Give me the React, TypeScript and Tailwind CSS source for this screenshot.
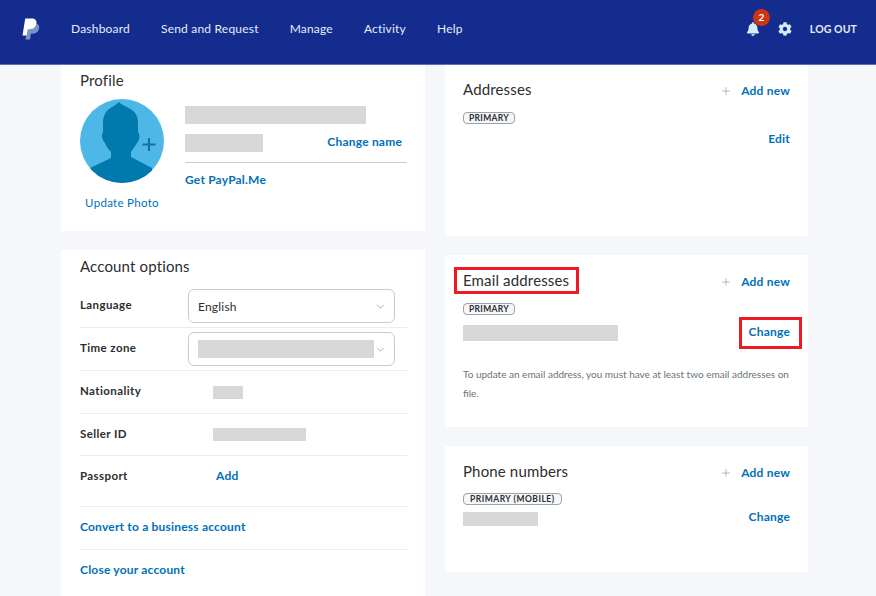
import React from "react";
import { FaBell, FaCog } from "react-icons/fa";
import { ChevronDown, Plus } from "lucide-react";

const font = "font-['Lato',sans-serif]";
const link = "text-[12px] font-bold text-[#0070ba] tracking-[0.2px]";
const title = "text-[15px] leading-[20px] tracking-[0.15px] text-[#2c2e2f]";
const label = "text-[11.5px] font-bold tracking-[0.4px] text-[#2c2e2f]";

function Logo() {
  return (
    <svg width="18" height="22" viewBox="0 0 18 22" className="shrink-0">
      <path d="M6 5.5h6.5c3.4 0 5.2 1.8 4.6 5-.6 3.4-3 5.200-6.300 5.200H8.900L8 21.500H3.500z" fill="#9db4dc" fillOpacity="0.75" />
      <path d="M3.200 0.500h6.300c3.500 0 5.500 1.700 4.900 5-.7 3.900-3.300 5.700-6.800 5.700H5.700l-1 6.300H0.500z" fill="#ffffff" />
    </svg>
  );
}

function Avatar() {
  return (
    <svg width="84" height="84" viewBox="0 0 84 84">
      <circle cx="42" cy="42" r="42" fill="#4db8e8" />
      <clipPath id="avatar-clip">
        <circle cx="42" cy="42" r="42" />
      </clipPath>
      <g clipPath="url(#avatar-clip)">
        <path
          d="M39 3C41 6 48 8 52 11C57 15 58 19 58 24V33C60 35 60 41 57 44C55 47 53 50 51 53V58L72 69V90H10V69L31 59V53C28 50 26 47 25 44C22 41 21 36 23 33V24C23 15 27 11 32 8C35 6 37 5 39 3z"
          fill="#0079ad"
        />
      </g>
      <path d="M69 39v13M62.500 45.500h13" stroke="#1a6f9c" strokeWidth="2.200" />
    </svg>
  );
}

function Blank({ className }: { className: string }) {
  return <div className={`bg-[#d8d8d8] ${className}`} />;
}

function AddNew() {
  return (
    <div className="flex items-center gap-[9px] pt-[3px]">
      <Plus size={12} strokeWidth={1} className="text-[#5f7f9c]" />
      <span className={link}>Add new</span>
    </div>
  );
}

function Badge({ children, wide }: { children: React.ReactNode; wide?: boolean }) {
  return (
    <span
      className={`flex h-[12px] w-fit items-center rounded-[4px] border border-[#9da3a6] bg-[#f5f7fa] text-[8.500px] font-bold leading-none text-[#2c2e2f] ${
        wide ? "px-[6px] tracking-[0.5px]" : "px-[5px] tracking-[0.3px]"
      }`}
    >
      {children}
    </span>
  );
}

function Select({ children }: { children: React.ReactNode }) {
  return (
    <div className="flex h-[34px] w-[207px] items-center justify-between rounded-[6px] border border-[#c5cdd3] pl-[9px] pr-[7px]">
      {children}
      <ChevronDown size={13} strokeWidth={1} className="text-[#6c7378]" />
    </div>
  );
}

function Row({ name, short, children }: { name: string; short?: boolean; children?: React.ReactNode }) {
  return (
    <div className={`flex items-center border-b border-[#eaeced] pl-[1px] ${short ? "h-[42px]" : "h-[43px]"}`}>
      <span className={`w-[108px] pb-[2px] ${label}`}>{name}</span>
      {children}
    </div>
  );
}

export default function App() {
  return (
    <div className={`${font} flex h-[596px] w-[876px] flex-col overflow-hidden bg-[#f5f7fa]`}>
      <header className="flex h-[65px] shrink-0 items-center border-b border-[#5c70b0] bg-[#142c8e] pb-[6px] pl-[22px] pr-[19px] text-white">
        <Logo />
        <nav className="ml-[31px] flex gap-[31px] text-[12px] tracking-[0.2px] text-[#e6edf7]">
          <span>Dashboard</span>
          <span>Send and Request</span>
          <span>Manage</span>
          <span>Activity</span>
          <span>Help</span>
        </nav>
        <div className="ml-auto flex items-center">
          <div className="relative mr-[18px]">
            <FaBell size={14} className="text-[#d5ecf9]" />
            <span className="absolute -right-[10px] -top-[13px] flex h-[17px] w-[17px] items-center justify-center rounded-full bg-[#d03511] text-[10px] font-bold text-white">
              2
            </span>
          </div>
          <FaCog size={14} className="mr-[18px] text-[#d5ecf9]" />
          <span className="pt-[1px] text-[10.500px] font-bold tracking-[0.1px] text-[#e6edf7]">LOG OUT</span>
        </div>
      </header>

      <main className="ml-[61px] flex w-[747px] gap-[20px]">
        <div className="flex w-[364px] shrink-0 flex-col gap-[19px]">
          <section className="h-[166px] bg-white pl-[19px] pr-[18px] pt-[5px]">
            <h2 className={title}>Profile</h2>
            <div className="mt-[9px] flex">
              <div className="flex w-[84px] shrink-0 flex-col items-center">
                <Avatar />
                <span className="mt-[12px] whitespace-nowrap text-[11.500px] leading-[16px] tracking-[0.3px] text-[#0070ba]">Update Photo</span>
              </div>
              <div className="ml-[21px] flex-1 pt-[7px]">
                <Blank className="h-[18px] w-[181px]" />
                <div className="mt-[10px] flex h-[18px] items-center justify-between pr-[5px]">
                  <Blank className="h-[18px] w-[78px]" />
                  <span className={`pb-[2px] ${link}`}>Change name</span>
                </div>
                <div className="mt-[10px] border-t border-[#c5cdd3] pt-[3px]">
                  <span className={link}>Get PayPal.Me</span>
                </div>
              </div>
            </div>
          </section>

          <section className="h-[346px] bg-white px-[18px] pt-[6px]">
            <h2 className={`pl-[1px] ${title}`}>Account options</h2>
            <div className="mt-[9px]">
              <Row name="Language">
                <Select>
                  <span className="pt-[2px] text-[12px] tracking-[0.2px] text-[#2c2e2f]">English</span>
                </Select>
              </Row>
              <Row name="Time zone">
                <Select>
                  <Blank className="h-[18px] w-[176px]" />
                </Select>
              </Row>
              <Row name="Nationality">
                <Blank className="ml-[25px] h-[13px] w-[30px]" />
              </Row>
              <Row name="Seller ID" short>
                <Blank className="ml-[25px] h-[13px] w-[93px]" />
              </Row>
              <div className="flex h-[51px] items-start border-b border-[#eaeced] pl-[1px] pt-[11px]">
                <span className={`w-[136px] ${label}`}>Passport</span>
                <span className={link}>Add</span>
              </div>
              <div className="flex h-[43px] items-center border-b border-[#eaeced] pl-[1px]">
                <span className={`pb-[2px] ${link}`}>Convert to a business account</span>
              </div>
              <div className="flex h-[40px] items-center pl-[1px]">
                <span className={link}>Close your account</span>
              </div>
            </div>
          </section>
        </div>

        <div className="flex w-[363px] shrink-0 flex-col gap-[19px]">
          <section className="h-[171px] bg-white px-[18px] pt-[14px]">
            <div className="flex h-[20px] items-start justify-between">
              <h2 className={title}>Addresses</h2>
              <AddNew />
            </div>
            <div className="mt-[13px]">
              <Badge>PRIMARY</Badge>
            </div>
            <div className={`mt-[6px] text-right ${link}`}>Edit</div>
          </section>

          <section className="h-[172px] bg-white px-[18px] pt-[15px]">
            <div className="flex h-[20px] items-start justify-between">
              <h2 className={`relative ${title}`}>
                Email addresses
                <span className="absolute -bottom-[4px] -left-[9px] -right-[10px] -top-[3px] border-[3px] border-[#ed1c24]" />
              </h2>
              <AddNew />
            </div>
            <div className="mt-[13px]">
              <Badge>PRIMARY</Badge>
            </div>
            <div className="mt-[8px] flex items-center justify-between">
              <Blank className="h-[16px] w-[155px]" />
              <span className={`relative pb-[2px] ${link}`}>
                Change
                <span className="absolute -bottom-[6px] -left-[10px] -right-[12px] -top-[6px] border-[3px] border-[#ed1c24]" />
              </span>
            </div>
            <p className="mt-[22px] text-[10px] leading-[19px] text-[#6c7378]">
              To update an email address, you must have at least two email addresses on file.
            </p>
          </section>

          <section className="h-[126px] bg-white px-[18px] pt-[15px]">
            <div className="flex h-[20px] items-start justify-between">
              <h2 className={title}>Phone numbers</h2>
              <AddNew />
            </div>
            <div className="mt-[12px]">
              <Badge wide>PRIMARY (MOBILE)</Badge>
            </div>
            <div className="mt-[7px] flex items-start justify-between">
              <Blank className="h-[14px] w-[75px]" />
              <span className={`-mt-[4px] ${link}`}>Change</span>
            </div>
          </section>
        </div>
      </main>
    </div>
  );
}
